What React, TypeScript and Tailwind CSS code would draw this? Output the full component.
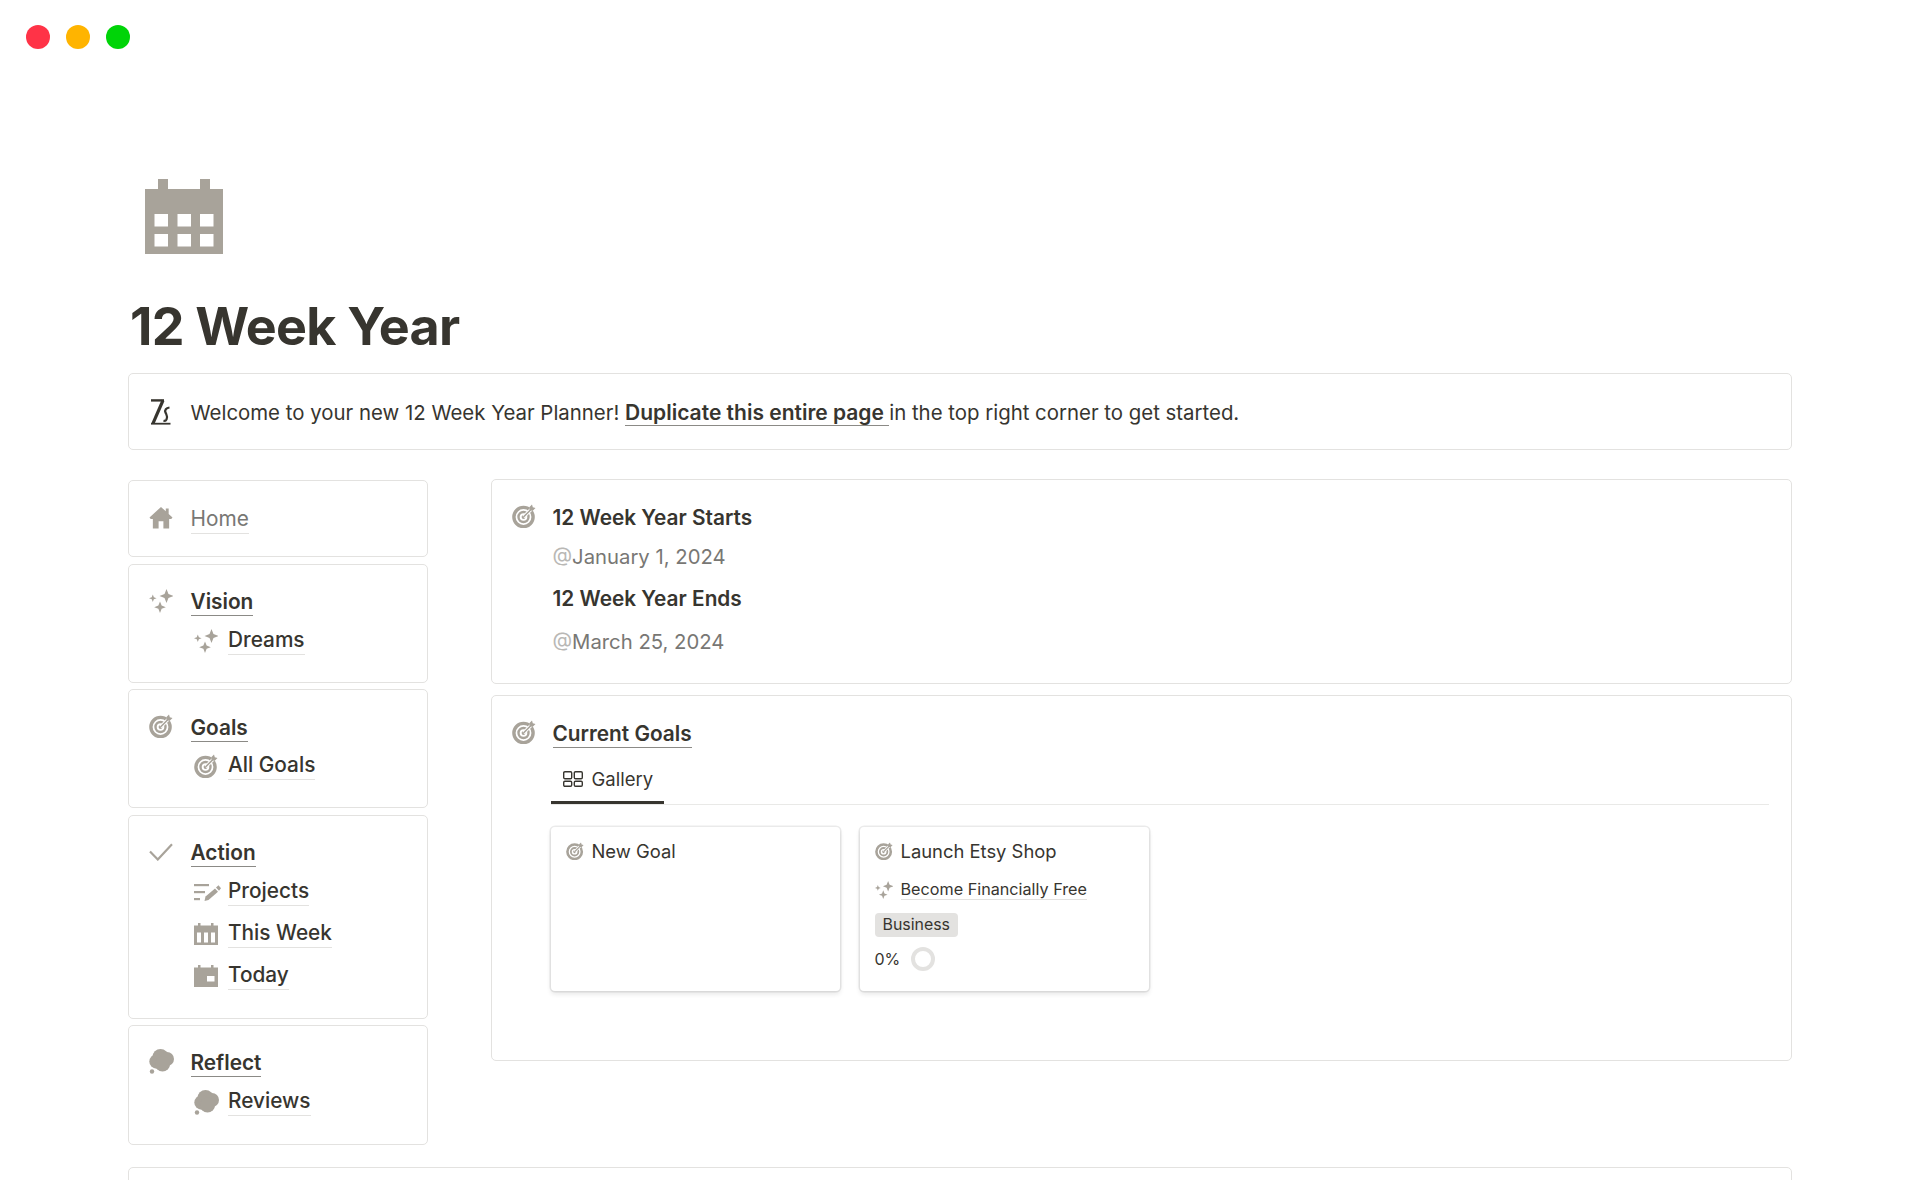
import type { ReactNode } from "react";

const GREY = "#a8a39a";

function star(cx: number, cy: number, r: number) {
  const k = r * 0.28;
  return `M${cx} ${cy - r}L${cx + k} ${cy - k}L${cx + r} ${cy}L${cx + k} ${cy + k}L${cx} ${cy + r}L${cx - k} ${cy + k}L${cx - r} ${cy}L${cx - k} ${cy - k}Z`;
}

function Sparkles({ size = 24 }: { size?: number }) {
  return (
    <svg width={size} height={size} viewBox="0 0 24 24" fill={GREY}>
      <path d={star(17.5, 7, 7)} />
      <path d={star(3.8, 9.2, 3.8)} />
      <path d={star(11, 18.2, 5.8)} />
    </svg>
  );
}

function Target({ size = 24 }: { size?: number }) {
  return (
    <svg width={size} height={size} viewBox="0 0 24 24" fill="none">
      <circle cx="11.5" cy="13" r="9.6" stroke={GREY} strokeWidth="3.4" />
      <circle cx="11.5" cy="13" r="5" stroke={GREY} strokeWidth="2.4" />
      <circle cx="11.5" cy="13" r="1.9" fill={GREY} />
      <path d="M11.5 13L19 5.5" stroke="#fff" strokeWidth="3.4" />
      <path d="M11.5 13L19 5.5" stroke={GREY} strokeWidth="1.6" />
      <path d="M17.5 3L20 .5L20.8 3.2L23.5 4L21 6.5H17.5Z" fill={GREY} />
    </svg>
  );
}

function Home() {
  return (
    <svg width="24" height="23" viewBox="0 0 24 24" fill={GREY}>
      <path d="M12 1L17 5.6V2.5H20V8.3L24 12L22.7 13.5H20.5V23.5H14.5V16H9.5V23.5H3.5V13.5H1.3L0 12Z" />
    </svg>
  );
}

function Check() {
  return (
    <svg width="24" height="18" viewBox="0 0 24 18" fill="none">
      <path d="M1 8.5L8.8 16.5L23 1.2" stroke={GREY} strokeWidth="2.2" />
    </svg>
  );
}

function Projects() {
  return (
    <svg width="27" height="18" viewBox="0 0 27 18" fill={GREY}>
      <rect x="0" y="1" width="15" height="2.2" />
      <rect x="0" y="8" width="11" height="2.2" />
      <rect x="0" y="15" width="6" height="2.2" />
      <path d="M10.5 18L11.5 13.5L21 5.5L24 8.8L14.5 17Z" />
      <path d="M22 4.5L24.5 2.3L27 5.2L25 7.8Z" />
    </svg>
  );
}

function WeekCalendar() {
  return (
    <svg width="24" height="22" viewBox="0 0 24 22" fill={GREY}>
      <path d="M0 2.5H4V0H6.5V2.5H17V0H19.5V2.5H24V22H0Z" />
      <rect x="3" y="9.5" width="4" height="10" fill="#fff" />
      <rect x="10" y="9.5" width="4" height="10" fill="#fff" />
      <rect x="17" y="9.5" width="4" height="10" fill="#fff" />
    </svg>
  );
}

function DayCalendar() {
  return (
    <svg width="24" height="22" viewBox="0 0 24 22" fill={GREY}>
      <path d="M0 2.5H4V0H6.5V2.5H17V0H19.5V2.5H24V22H0Z" />
      <rect x="13" y="11" width="7.5" height="5.5" fill="#fff" />
    </svg>
  );
}

function Cloud() {
  return (
    <svg width="25" height="25" viewBox="0 0 25 25" fill={GREY}>
      <circle cx="11.5" cy="8" r="8" />
      <circle cx="18" cy="10" r="7" />
      <circle cx="7.5" cy="12.5" r="7.2" />
      <circle cx="13.5" cy="15" r="7.6" />
      <circle cx="3" cy="22.5" r="2.2" />
    </svg>
  );
}

function BigCalendar() {
  return (
    <svg width="78" height="75" viewBox="0 0 78 75" fill={GREY}>
      <path d="M0 10H13V0H23V10H55V0H65V10H78V75H0Z" />
      <g fill="#fff">
        <rect x="9.5" y="35" width="13.5" height="12.5" />
        <rect x="32.5" y="35" width="13.5" height="12.5" />
        <rect x="55" y="35" width="13.5" height="12.5" />
        <rect x="9.5" y="55" width="13.5" height="12.5" />
        <rect x="32.5" y="55" width="13.5" height="12.5" />
        <rect x="55" y="55" width="13.5" height="12.5" />
      </g>
    </svg>
  );
}

function ZsMark() {
  return (
    <svg width="21" height="26" viewBox="0 0 21 26" fill="none" stroke="#37352f">
      <path d="M1 1.4H14" strokeWidth="2.4" />
      <path d="M13 1.4L3 24.4" strokeWidth="3.2" />
      <path d="M1 24.7H20.5" strokeWidth="1.8" />
      <path d="M19.5 8.5C16 9 14.5 11 15.5 13.5C16.5 16 18 17 16.5 20.5C15.8 21.8 14.5 22 13.5 21.5" strokeWidth="2.2" />
    </svg>
  );
}

function GalleryIcon() {
  return (
    <svg width="20" height="16" viewBox="0 0 20 16" fill="none" stroke="#37352f" strokeWidth="1.4">
      <rect x=".7" y=".7" width="8" height="7" rx="1.2" />
      <rect x="11.3" y=".7" width="8" height="7" rx="1.2" />
      <rect x=".7" y="10.3" width="8" height="5" rx="1.2" />
      <rect x="11.3" y="10.3" width="8" height="5" rx="1.2" />
    </svg>
  );
}

function Head({ icon, children, muted, narrow }: { icon: ReactNode; children: ReactNode; muted?: boolean; narrow?: boolean }) {
  return (
    <div className="flex h-[30px] items-center">
      <span className={`flex shrink-0 -translate-y-[2px] ${narrow ? "w-[40.5px]" : "w-[41.5px]"}`}>{icon}</span>
      <span
        className={
          muted
            ? "border-b border-[#e3e2e0] text-[20.8px] leading-[28px] text-[#787774]"
            : "border-b-[1.5px] border-[#8b8a86] text-[20.8px] font-semibold leading-[26px]"
        }
      >
        {children}
      </span>
    </div>
  );
}

function Sub({ icon, children, className }: { icon: ReactNode; children: ReactNode; className: string }) {
  return (
    <div className={`flex h-[30px] items-center pl-[45px] ${className}`}>
      <span className="flex w-[34px] shrink-0">{icon}</span>
      <span className="border-b-[1.5px] border-[#e3e2e0] pb-[2px] text-[20.8px] font-medium leading-[25px]">
        {children}
      </span>
    </div>
  );
}

function NavBox({ className, children }: { className: string; children: ReactNode }) {
  return (
    <div className={`box-border rounded-[5px] border-[1.5px] border-[#e3e2e0] pl-5 ${className}`}>
      {children}
    </div>
  );
}

function Sidebar() {
  return (
    <div className="flex w-[300px] shrink-0 flex-col gap-[6.5px] pt-[30px]">
      <NavBox className="h-[77px] pt-[23px]">
        <Head icon={<Home />} muted>
          Home
        </Head>
      </NavBox>
      <NavBox className="h-[119px] pt-[23px]">
        <Head icon={<Sparkles />}>Vision</Head>
        <Sub icon={<Sparkles />} className="mt-2">
          Dreams
        </Sub>
      </NavBox>
      <NavBox className="h-[119px] pt-[23px]">
        <Head icon={<Target />}>Goals</Head>
        <Sub icon={<Target />} className="mt-2">
          All Goals
        </Sub>
      </NavBox>
      <NavBox className="h-[204px] pt-[23px]">
        <Head icon={<Check />}>Action</Head>
        <Sub icon={<Projects />} className="mt-[8.5px]">
          Projects
        </Sub>
        <Sub icon={<WeekCalendar />} className="mt-3">
          This Week
        </Sub>
        <Sub icon={<DayCalendar />} className="mt-3">
          Today
        </Sub>
      </NavBox>
      <NavBox className="h-[120px] pt-[22px]">
        <Head icon={<Cloud />}>Reflect</Head>
        <Sub icon={<Cloud />} className="mt-[9px]">
          Reviews
        </Sub>
      </NavBox>
    </div>
  );
}

function DateLine({ children, className }: { children: string; className: string }) {
  return (
    <div className={`pl-[40.5px] text-[20.3px] leading-[30px] text-[#787774] ${className}`}>
      <span className="text-[#b9b8b5]">@</span>
      {children}
    </div>
  );
}

function DatesPanel() {
  return (
    <div className="box-border h-[205px] rounded-[5px] border-[1.5px] border-[#e3e2e0] pl-5 pt-[23px]">
      <div className="flex h-[30px] items-center text-[20.8px] font-semibold leading-[30px]">
        <span className="flex w-[40.5px] shrink-0 -translate-y-[2px]">
          <Target />
        </span>
        12 Week Year Starts
      </div>
      <DateLine className="mt-[9px]">January 1, 2024</DateLine>
      <div className="mt-3 pl-[40.5px] text-[20.8px] font-semibold leading-[30px]">12 Week Year Ends</div>
      <DateLine className="mt-[13px]">March 25, 2024</DateLine>
    </div>
  );
}

function GoalCard({ title, children }: { title: string; children?: ReactNode }) {
  return (
    <div className="box-border h-[164px] w-[289px] rounded-[4px] pl-[15px] pt-[11px] shadow-[0_0_0_1.5px_rgba(15,15,15,0.08),0_3px_5px_rgba(15,15,15,0.1)]">
      <div className="flex h-[26px] items-center text-[18.4px] leading-[26px]">
        <span className="flex w-[26px] shrink-0">
          <Target size={18} />
        </span>
        {title}
      </div>
      {children}
    </div>
  );
}

function GoalsPanel() {
  return (
    <div className="box-border h-[366px] rounded-[5px] border-[1.5px] border-[#e3e2e0] pl-5 pr-[22px] pt-[23px]">
      <Head icon={<Target />} narrow>
        Current Goals
      </Head>
      <div className="ml-[38.5px]">
        <div className="mt-[17px] flex border-b border-[#e9e9e7]">
          <div className="flex h-[38px] w-[113px] items-start gap-[9px] border-b-[3px] border-[#37352f] pl-3 text-[18.5px] leading-[26px]">
            <span className="mt-[5px] flex">
              <GalleryIcon />
            </span>
            Gallery
          </div>
        </div>
        <div className="mt-[22px] flex gap-5">
          <GoalCard title="New Goal" />
          <GoalCard title="Launch Etsy Shop">
            <div className="mt-[15.5px] flex h-5 items-center text-[16.2px] leading-5">
              <span className="flex w-[26px] shrink-0">
                <Sparkles size={18} />
              </span>
              <span className="border-b border-[#e3e2e0]">Become Financially Free</span>
            </div>
            <div className="mt-[13px] inline-block h-6 rounded-[4px] bg-[#e3e2e0] px-2 text-[15.9px] leading-6">
              Business
            </div>
            <div className="mt-[9px] flex h-6 items-center gap-[11px] text-[16px] leading-6">
              0%
              <span className="box-border h-6 w-6 rounded-full border-[4.5px] border-[#e3e2e0]" />
            </div>
          </GoalCard>
        </div>
      </div>
    </div>
  );
}

export default function App() {
  return (
    <div className="h-[1180px] overflow-hidden bg-white text-[20.4px] text-[#37352f] [font-family:Inter,sans-serif]">
      <div className="flex gap-4 pl-[26px] pt-[25px]">
        <span className="h-6 w-6 rounded-full bg-[#ff3347]" />
        <span className="h-6 w-6 rounded-full bg-[#ffb400]" />
        <span className="h-6 w-6 rounded-full bg-[#00d408]" />
      </div>
      <div className="ml-[128px] w-[1664px]">
        <div className="ml-[17px] mt-[130px] flex">
          <BigCalendar />
        </div>
        <h1 className="ml-[2px] mt-[43px] text-[52px] font-bold leading-[60px] tracking-[-0.0144em]">12 Week Year</h1>
        <div className="mt-4 box-border flex h-[77px] items-center rounded-[5px] border-[1.5px] border-[#e3e2e0] pl-[21px] pt-[3px]">
          <span className="flex w-[40.5px] shrink-0 -translate-y-[1px]">
            <ZsMark />
          </span>
          <p>
            Welcome to your new 12 Week Year Planner!{" "}
            <span className="border-b-[1.5px] border-[#8b8a86] text-[21px] font-semibold">Duplicate this entire page </span>
            in the top right corner to get started.
          </p>
        </div>
        <div className="flex gap-[63px]">
          <Sidebar />
          <div className="flex flex-1 flex-col gap-[11px] pt-[29px]">
            <DatesPanel />
            <GoalsPanel />
          </div>
        </div>
        <div className="mt-[22px] h-20 rounded-[5px] border-[1.5px] border-[#e3e2e0]" />
      </div>
    </div>
  );
}
